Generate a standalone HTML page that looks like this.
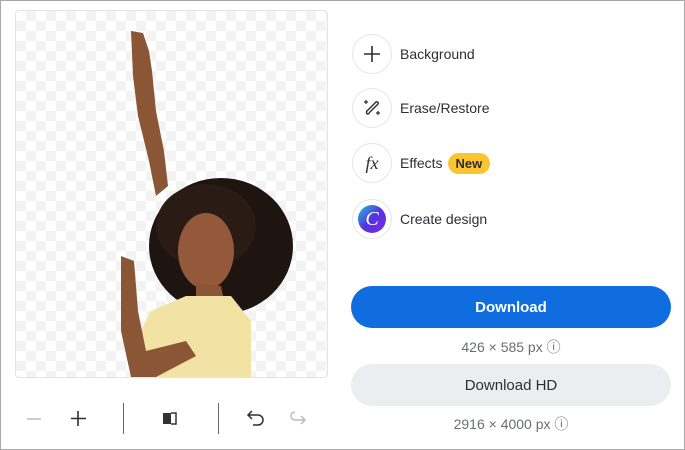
<!DOCTYPE html>
<html><head><style>
body{margin:0;width:685px;height:450px;overflow:hidden;font-family:"Liberation Sans",sans-serif;background:#fff}
.frame{position:absolute;left:0;top:0;width:683px;height:448px;border:1px solid #a8a8a8}
.panel{position:absolute;left:15px;top:10px;width:311px;height:366px;border:1px solid #e3e3e3;border-radius:4px;overflow:hidden;
background-color:#fff;background-image:linear-gradient(45deg,#f3f3f3 25%,transparent 25%,transparent 75%,#f3f3f3 75%),linear-gradient(45deg,#f3f3f3 25%,transparent 25%,transparent 75%,#f3f3f3 75%);background-size:20px 20px;background-position:0 0,10px 10px}
.item{position:absolute;left:352px;display:flex;align-items:center;font-size:14px;color:#2d2f33}
.circ{width:40px;height:40px;border:1.5px solid #e6e6e6;border-radius:50%;display:flex;align-items:center;justify-content:center;margin-right:8px;box-sizing:border-box}
.new{background:#fbc52f;border-radius:11px;padding:3px 8px;margin-left:5px;font-weight:bold;font-size:13px}
.btn{position:absolute;left:351px;width:320px;height:42px;border-radius:21px;display:flex;align-items:center;justify-content:center;font-size:15px;font-weight:bold}
.sub{position:absolute;left:351px;width:320px;text-align:center;font-size:14px;color:#6b6e73}
.vl{position:absolute;top:403px;width:1px;height:31px;background:#666}
</style></head><body>
<div class="frame"></div>
<div class="panel">
<svg width="311" height="366" viewBox="0 0 311 366">
<path d="M115 20 L127 22 L133 40 L136 60 L140 100 L148 140 L152 175 L140 185 L133 150 L122 105 L117 65 Z" fill="#8a5636"/>
<ellipse cx="205" cy="235" rx="72" ry="68" fill="#1e1410"/>
<ellipse cx="190" cy="215" rx="50" ry="42" fill="#2a1b14"/>
<ellipse cx="190" cy="240" rx="28" ry="38" fill="#93593a"/>
<path d="M180 272 L205 275 L210 300 L180 300 Z" fill="#8a5636"/>
<path d="M135 300 L170 285 L215 285 L235 310 L235 366 L120 366 L125 320 Z" fill="#f2e2a4"/>
<path d="M105 245 L118 250 L122 300 L130 340 L170 330 L180 345 L140 366 L115 366 L105 320 Z" fill="#8a5636"/>
</svg>
</div>
<div class="item" style="top:34px"><div class="circ"><svg width="18" height="18"><path d="M9 1v16M1 9h16" stroke="#2d2f33" stroke-width="1.6"/></svg></div>Background</div>
<div class="item" style="top:88px"><div class="circ"><svg width="20" height="20"><path d="M6 16c-2 0-2-3 0-4l8-8c1-1 3 1 2 2l-8 8c-1 1-1 2-2 2z" fill="none" stroke="#2d2f33" stroke-width="1.4"/><path d="M4 2v4M2 4h4M16 13v4M14 15h4" stroke="#2d2f33" stroke-width="1.2"/></svg></div>Erase/Restore</div>
<div class="item" style="top:143px"><div class="circ" style="font-family:'Liberation Serif',serif;font-style:italic;font-size:18px">fx</div>Effects<span class="new">New</span></div>
<div class="item" style="top:199px"><div class="circ"><div style="width:28px;height:28px;border-radius:50%;background:linear-gradient(135deg,#1fc5d6,#5533e0,#7c2ae8);color:#fff;font-family:'Liberation Serif',serif;font-style:italic;font-size:20px;text-align:center;line-height:28px">C</div></div>Create design</div>
<div class="btn" style="top:286px;background:#0f6de0;color:#fff">Download</div>
<div class="sub" style="top:337px">426 × 585 px ⓘ</div>
<div class="btn" style="top:364px;background:#ebedf0;color:#2d2f33;font-weight:normal">Download HD</div>
<div class="sub" style="top:414px">2916 × 4000 px ⓘ</div>
<svg style="position:absolute;left:25px;top:410px" width="20" height="18"><path d="M2 9h14" stroke="#bbb" stroke-width="1.5"/></svg>
<svg style="position:absolute;left:69px;top:409px" width="20" height="20"><path d="M9 2v15M2 9.5h15" stroke="#2d2f33" stroke-width="1.6"/></svg>
<div class="vl" style="left:123px"></div>
<svg style="position:absolute;left:160px;top:409px" width="22" height="18"><path d="M3 4h8v11H3z" fill="#333"/><path d="M11 4h5v11h-5" fill="none" stroke="#333" stroke-width="1.5"/></svg>
<div class="vl" style="left:218px"></div>
<svg style="position:absolute;left:246px;top:408px" width="22" height="20"><path d="M6 3L2 7l4 4M2 7h10a5 5 0 010 10H7" fill="none" stroke="#2d2f33" stroke-width="1.5"/></svg>
<svg style="position:absolute;left:287px;top:410px" width="22" height="20"><path d="M14 6l4 4-4 4M18 10H8a4 4 0 010-8" fill="none" stroke="#bbb" stroke-width="1.5"/></svg>
</body></html>
